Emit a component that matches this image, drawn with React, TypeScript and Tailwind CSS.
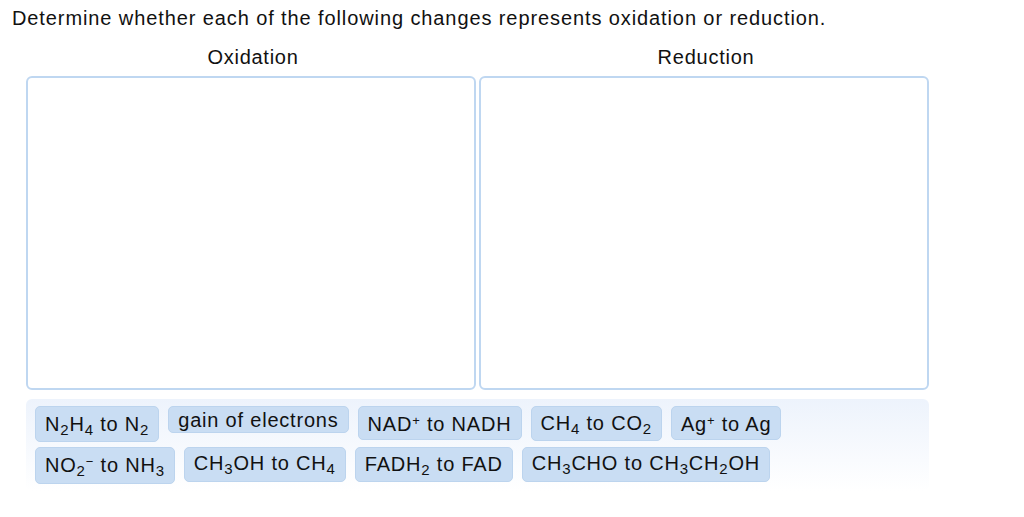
import React from "react";

const font = { fontFamily: '"Liberation Sans", Arial, sans-serif' };

function Chip({ children, cls }: { children: React.ReactNode; cls: string }) {
  return (
    <div
      className={`rounded-[5px] border border-[#bcd4ee] bg-[#c9ddf3] px-[9px] text-[20px] leading-[22px] tracking-[0.8px] text-[#111] whitespace-nowrap ${cls}`}
    >
      {children}
    </div>
  );
}

const Sub = ({ c }: { c: string }) => <sub className="text-[15px]">{c}</sub>;
const Sup = ({ c }: { c: string }) => <sup className="text-[13px]">{c}</sup>;

export default function App() {
  return (
    <div className="w-[1024px] h-[517px] bg-white text-[#111]" style={font}>
      <div className="pl-[12px] pt-[6px] text-[20px] leading-[24px] tracking-[0.9px]">
        Determine whether each of the following changes represents oxidation or reduction.
      </div>
      <div className="ml-[26px] w-[903px]">
        <div className="flex gap-[3px] mt-[15px]">
          <div className="flex-1 flex flex-col">
            <div className="text-center text-[20px] leading-[24px] tracking-[0.75px] pl-[4px]">Oxidation</div>
            <div className="mt-[7px] h-[314px] rounded-[6px] border-2 border-[#bfd7f1]"></div>
          </div>
          <div className="flex-1 flex flex-col">
            <div className="text-center text-[20px] leading-[24px] tracking-[0.75px] pl-[4px]">Reduction</div>
            <div className="mt-[7px] h-[314px] rounded-[6px] border-2 border-[#bfd7f1]"></div>
          </div>
        </div>
        <div className="mt-[9px] h-[92px] rounded-[6px] bg-gradient-to-b from-[#edf3fc] to-[#ffffff] pl-[9px] pt-[7px]">
          <div className="flex flex-wrap items-start gap-x-[9px] gap-y-[5px] w-[752px]">
            <Chip cls="h-[36px] pt-[6px]">
              N<Sub c="2" />H<Sub c="4" /> to N<Sub c="2" />
            </Chip>
            <Chip cls="h-[27px] pt-[2px]">gain of electrons</Chip>
            <Chip cls="h-[34px] pt-[6px]">
              NAD<Sup c="+" /> to NADH
            </Chip>
            <Chip cls="h-[35px] pt-[5px]">
              CH<Sub c="4" /> to CO<Sub c="2" />
            </Chip>
            <Chip cls="h-[34px] pt-[6px]">
              Ag<Sup c="+" /> to Ag
            </Chip>
            <Chip cls="h-[37px] pt-[6px]">
              NO<Sub c="2" />
              <Sup c="−" /> to NH<Sub c="3" />
            </Chip>
            <Chip cls="h-[35px] pt-[4px]">
              CH<Sub c="3" />OH to CH<Sub c="4" />
            </Chip>
            <Chip cls="h-[35px] pt-[5px]">
              FADH<Sub c="2" /> to FAD
            </Chip>
            <Chip cls="h-[35px] pt-[4px]">
              CH<Sub c="3" />CHO to CH<Sub c="3" />CH<Sub c="2" />OH
            </Chip>
          </div>
        </div>
      </div>
    </div>
  );
}
